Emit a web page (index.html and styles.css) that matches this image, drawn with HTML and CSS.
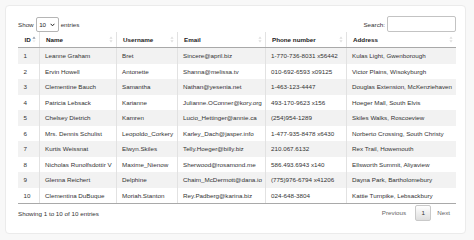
FILE: index.html
```html
<!DOCTYPE html>
<html>
<head>
<meta charset="utf-8">
<link rel="stylesheet" href="styles.css">
</head>
<body>
<div class="card">
  <div class="controls">
    <label class="length">Show
      <span class="select-wrap">
        <select class="select"><option>10</option></select>
        <svg class="chev" width="5" height="4" viewBox="0 0 5 4"><path d="M0.6 0.8 L2.5 2.8 L4.4 0.8" fill="none" stroke="#222" stroke-width="1"/></svg>
      </span>
      entries</label>
    <label class="search">Search:<input class="search-input" type="text"></label>
  </div>
  <table class="grid">
    <colgroup>
      <col style="width:21px"><col style="width:77px"><col style="width:61px"><col style="width:88px"><col style="width:81px"><col style="width:110px">
    </colgroup>
    <thead>
      <tr>
        <th><div class="th">ID<svg class="sort" width="4" height="7" viewBox="0 0 4 7"><path d="M2 0.5 L3.6 2.8 L0.4 2.8Z" fill="#8f9aab"/><path d="M2 6.5 L3.6 4.2 L0.4 4.2Z" fill="#ececec"/></svg></div></th>
        <th><div class="th">Name<svg class="sort" width="4" height="7" viewBox="0 0 4 7"><path d="M2 0.5 L3.6 2.8 L0.4 2.8Z" fill="#dedede"/><path d="M2 6.5 L3.6 4.2 L0.4 4.2Z" fill="#dedede"/></svg></div></th>
        <th><div class="th">Username<svg class="sort" width="4" height="7" viewBox="0 0 4 7"><path d="M2 0.5 L3.6 2.8 L0.4 2.8Z" fill="#dedede"/><path d="M2 6.5 L3.6 4.2 L0.4 4.2Z" fill="#dedede"/></svg></div></th>
        <th><div class="th">Email<svg class="sort" width="4" height="7" viewBox="0 0 4 7"><path d="M2 0.5 L3.6 2.8 L0.4 2.8Z" fill="#dedede"/><path d="M2 6.5 L3.6 4.2 L0.4 4.2Z" fill="#dedede"/></svg></div></th>
        <th><div class="th">Phone number<svg class="sort" width="4" height="7" viewBox="0 0 4 7"><path d="M2 0.5 L3.6 2.8 L0.4 2.8Z" fill="#dedede"/><path d="M2 6.5 L3.6 4.2 L0.4 4.2Z" fill="#dedede"/></svg></div></th>
        <th><div class="th">Address<svg class="sort" width="4" height="7" viewBox="0 0 4 7"><path d="M2 0.5 L3.6 2.8 L0.4 2.8Z" fill="#dedede"/><path d="M2 6.5 L3.6 4.2 L0.4 4.2Z" fill="#dedede"/></svg></div></th>
      </tr>
    </thead>
    <tbody>
      <tr><td>1</td><td>Leanne Graham</td><td>Bret</td><td>Sincere@april.biz</td><td>1-770-736-8031 x56442</td><td>Kulas Light, Gwenborough</td></tr>
      <tr><td>2</td><td>Ervin Howell</td><td>Antonette</td><td>Shanna@melissa.tv</td><td>010-692-6593 x09125</td><td>Victor Plains, Wisokyburgh</td></tr>
      <tr><td>3</td><td>Clementine Bauch</td><td>Samantha</td><td>Nathan@yesenia.net</td><td>1-463-123-4447</td><td>Douglas Extension, McKenziehaven</td></tr>
      <tr><td>4</td><td>Patricia Lebsack</td><td>Karianne</td><td>Julianne.OConner@kory.org</td><td>493-170-9623 x156</td><td>Hoeger Mall, South Elvis</td></tr>
      <tr><td>5</td><td>Chelsey Dietrich</td><td>Kamren</td><td>Lucio_Hettinger@annie.ca</td><td>(254)954-1289</td><td>Skiles Walks, Roscoeview</td></tr>
      <tr><td>6</td><td>Mrs. Dennis Schulist</td><td>Leopoldo_Corkery</td><td>Karley_Dach@jasper.info</td><td>1-477-935-8478 x6430</td><td>Norberto Crossing, South Christy</td></tr>
      <tr><td>7</td><td>Kurtis Weissnat</td><td>Elwyn.Skiles</td><td>Telly.Hoeger@billy.biz</td><td>210.067.6132</td><td>Rex Trail, Howemouth</td></tr>
      <tr><td>8</td><td>Nicholas Runolfsdottir V</td><td>Maxime_Nienow</td><td>Sherwood@rosamond.me</td><td>586.493.6943 x140</td><td>Ellsworth Summit, Aliyaview</td></tr>
      <tr><td>9</td><td>Glenna Reichert</td><td>Delphine</td><td>Chaim_McDermott@dana.io</td><td>(775)976-6794 x41206</td><td>Dayna Park, Bartholomebury</td></tr>
      <tr><td>10</td><td>Clementina DuBuque</td><td>Moriah.Stanton</td><td>Rey.Padberg@karina.biz</td><td>024-648-3804</td><td>Kattie Turnpike, Lebsackbury</td></tr>
    </tbody>
  </table>
  <div class="footer">
    <div class="info">Showing 1 to 10 of 10 entries</div>
    <div class="paginate">
      <span class="pbtn">Previous</span>
      <span class="pbtn current">1</span>
      <span class="pbtn">Next</span>
    </div>
  </div>
</div>
</body>
</html>
```
FILE: styles.css
```css
html, body {
  margin: 0;
  padding: 0;
}
body {
  background: #f8f8f8;
  font-family: "Liberation Sans", Arial, sans-serif;
  font-size: 6.25px;
  color: #333;
  width: 474px;
  height: 240px;
  overflow: hidden;
}
.card {
  margin: 5px 0 0 5px;
  width: 461px;
  height: 229px;
  box-sizing: border-box;
  background: #fff;
  border: 1px solid #ebebeb;
  border-radius: 4px;
  padding: 10px 9px 0 12px;
}
.controls {
  display: flex;
  justify-content: space-between;
  align-items: center;
  height: 16px;
}
.length {
  display: flex;
  align-items: center;
  gap: 2px;
}
.select-wrap {
  position: relative;
  display: inline-block;
  width: 23px;
  height: 15px;
}
.select {
  appearance: none;
  -webkit-appearance: none;
  width: 23px;
  height: 15px;
  box-sizing: border-box;
  margin: 0;
  border: 1px solid #b5b5b5;
  border-radius: 2px;
  background: #fff;
  font-family: inherit;
  font-size: 6.25px;
  color: #222;
  padding: 0 0 0 2.5px;
  outline: none;
}
.chev {
  position: absolute;
  right: 4px;
  top: 6px;
}
.search {
  display: flex;
  align-items: center;
  gap: 2px;
}
.search-input {
  width: 69px;
  height: 16px;
  box-sizing: border-box;
  margin: 0;
  border: 1px solid #c3c3c3;
  border-radius: 2px;
  padding: 0 3px;
  outline: none;
}
.grid {
  width: 438px;
  table-layout: fixed;
  border-collapse: collapse;
  border-spacing: 0;
}
.grid th {
  height: 15px;
  padding: 0 3px 0 6.5px;
  text-align: left;
  font-weight: bold;
  color: #222;
  border-bottom: 1px solid #a9a9a9;
  border-left: 1px solid #e2e2e2;
  white-space: nowrap;
}
.grid th:first-child,
.grid td:first-child {
  border-left: none;
}
.th {
  display: flex;
  justify-content: space-between;
  align-items: center;
}
.sort {
  display: block;
  flex: none;
}
.grid td {
  height: 15.5px;
  padding: 0 0 0 5.5px;
  line-height: 15.5px;
  border-left: 1px solid #e2e2e2;
  white-space: nowrap;
  overflow: hidden;
  color: #333;
}
.grid tbody tr:nth-child(odd) td {
  background: #f2f2f2;
}
.grid tbody tr:last-child td {
  border-bottom: 1px solid #a9a9a9;
}
.footer {
  display: flex;
  justify-content: space-between;
  align-items: center;
  height: 18px;
  padding-top: 0;
}
.info {
  color: #333;
}
.paginate {
  display: flex;
  align-items: center;
  padding-right: 1px;
}
.pbtn {
  display: block;
  padding: 0 5px;
  height: 16px;
  line-height: 16px;
  color: #666;
}
.pbtn.current {
  box-sizing: border-box;
  width: 16px;
  padding: 0;
  margin: 0 1px 0 4px;
  text-align: center;
  color: #333;
  border: 1px solid #c9c9c9;
  border-radius: 2px;
  line-height: 14px;
  background: linear-gradient(#ffffff, #dedede);
}
```
